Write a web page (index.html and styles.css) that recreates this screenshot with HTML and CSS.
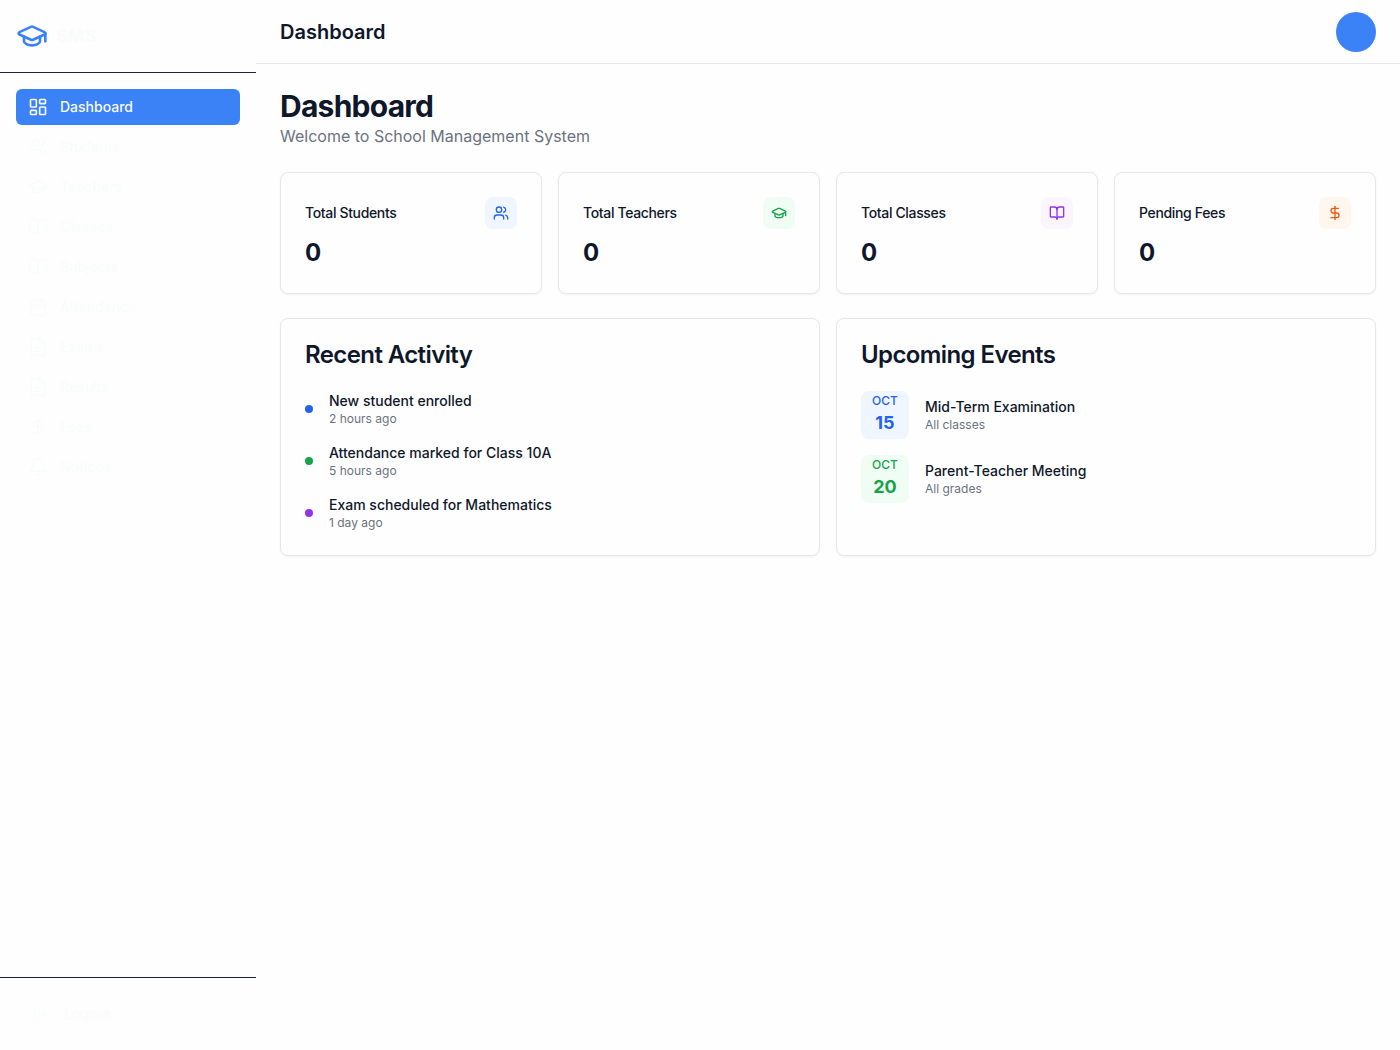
FILE: index.html
```html
<!DOCTYPE html>
<html lang="en">
<head>
<meta charset="utf-8">
<meta name="viewport" content="width=device-width, initial-scale=1">
<title>Dashboard</title>
<link rel="stylesheet" href="styles.css">
</head>
<body>
<svg class="sprite" aria-hidden="true">
  <symbol id="cap" viewBox="0 0 24 24"><path d="M21.42 10.922a1 1 0 0 0-.019-1.838L12.83 5.18a2 2 0 0 0-1.66 0L2.6 9.08a1 1 0 0 0 0 1.832l8.57 3.908a2 2 0 0 0 1.66 0z"/><path d="M22 10v6"/><path d="M6 12.5V16a6 3 0 0 0 12 0v-3.5"/></symbol>
  <symbol id="grid" viewBox="0 0 24 24"><rect width="7" height="9" x="3" y="3" rx="1"/><rect width="7" height="5" x="14" y="3" rx="1"/><rect width="7" height="9" x="14" y="12" rx="1"/><rect width="7" height="5" x="3" y="16" rx="1"/></symbol>
  <symbol id="users" viewBox="0 0 24 24"><path d="M16 21v-2a4 4 0 0 0-4-4H6a4 4 0 0 0-4 4v2"/><circle cx="9" cy="7" r="4"/><path d="M22 21v-2a4 4 0 0 0-3-3.87"/><path d="M16 3.13a4 4 0 0 1 0 7.75"/></symbol>
  <symbol id="book" viewBox="0 0 24 24"><path d="M12 7v14"/><path d="M3 18a1 1 0 0 1-1-1V4a1 1 0 0 1 1-1h5a4 4 0 0 1 4 4 4 4 0 0 1 4-4h5a1 1 0 0 1 1 1v13a1 1 0 0 1-1 1h-6a3 3 0 0 0-3 3 3 3 0 0 0-3-3z"/></symbol>
  <symbol id="calendar" viewBox="0 0 24 24"><path d="M8 2v4"/><path d="M16 2v4"/><rect width="18" height="18" x="3" y="4" rx="2"/><path d="M3 10h18"/></symbol>
  <symbol id="file" viewBox="0 0 24 24"><path d="M15 2H6a2 2 0 0 0-2 2v16a2 2 0 0 0 2 2h12a2 2 0 0 0 2-2V7Z"/><path d="M14 2v4a2 2 0 0 0 2 2h4"/><path d="M16 13H8"/><path d="M16 17H8"/></symbol>
  <symbol id="dollar" viewBox="0 0 24 24"><path d="M12 2v20"/><path d="M17 5H9.5a3.5 3.5 0 0 0 0 7h5a3.5 3.5 0 0 1 0 7H6"/></symbol>
  <symbol id="bell" viewBox="0 0 24 24"><path d="M10.268 21a2 2 0 0 0 3.464 0"/><path d="M3.262 15.326A1 1 0 0 0 4 17h16a1 1 0 0 0 .74-1.673C19.41 13.956 18 12.499 18 8A6 6 0 0 0 6 8c0 4.499-1.411 5.956-2.738 7.326"/></symbol>
  <symbol id="logout" viewBox="0 0 24 24"><path d="m16 17 5-5-5-5"/><path d="M21 12H9"/><path d="M9 21H5a2 2 0 0 1-2-2V5a2 2 0 0 1 2-2h4"/></symbol>
</svg>
<div class="app">
  <aside class="sidebar">
    <div class="brand"><svg class="icon icon-lg"><use href="#cap"/></svg><span>SMS</span></div>
    <nav class="nav">
      <a class="nav-link active" href="#"><svg class="icon icon-md"><use href="#grid"/></svg>Dashboard</a>
      <a class="nav-link" href="#"><svg class="icon icon-md"><use href="#users"/></svg>Students</a>
      <a class="nav-link" href="#"><svg class="icon icon-md"><use href="#cap"/></svg>Teachers</a>
      <a class="nav-link" href="#"><svg class="icon icon-md"><use href="#book"/></svg>Classes</a>
      <a class="nav-link" href="#"><svg class="icon icon-md"><use href="#book"/></svg>Subjects</a>
      <a class="nav-link" href="#"><svg class="icon icon-md"><use href="#calendar"/></svg>Attendance</a>
      <a class="nav-link" href="#"><svg class="icon icon-md"><use href="#file"/></svg>Exams</a>
      <a class="nav-link" href="#"><svg class="icon icon-md"><use href="#file"/></svg>Results</a>
      <a class="nav-link" href="#"><svg class="icon icon-md"><use href="#dollar"/></svg>Fees</a>
      <a class="nav-link" href="#"><svg class="icon icon-md"><use href="#bell"/></svg>Notices</a>
    </nav>
    <div class="sidebar-foot"><button class="logout" type="button"><svg class="icon icon-sm"><use href="#logout"/></svg>Logout</button></div>
  </aside>
  <div class="content">
    <header class="topbar"><span class="topbar-title">Dashboard</span><button class="avatar" type="button" aria-label="Account"></button></header>
    <main class="main">
      <div>
        <h1 class="title">Dashboard</h1>
        <p class="subtitle">Welcome to School Management System</p>
      </div>
      <section class="stats">
        <article class="card"><div class="stat-head"><h2 class="stat-label">Total Students</h2><span class="badge blue"><svg class="icon icon-sm"><use href="#users"/></svg></span></div><p class="stat-value">0</p></article>
        <article class="card"><div class="stat-head"><h2 class="stat-label">Total Teachers</h2><span class="badge green"><svg class="icon icon-sm"><use href="#cap"/></svg></span></div><p class="stat-value">0</p></article>
        <article class="card"><div class="stat-head"><h2 class="stat-label">Total Classes</h2><span class="badge purple"><svg class="icon icon-sm"><use href="#book"/></svg></span></div><p class="stat-value">0</p></article>
        <article class="card"><div class="stat-head"><h2 class="stat-label">Pending Fees</h2><span class="badge orange"><svg class="icon icon-sm"><use href="#dollar"/></svg></span></div><p class="stat-value">0</p></article>
      </section>
      <section class="panels">
        <article class="card">
          <h2 class="panel-title">Recent Activity</h2>
          <ul class="list">
            <li class="row"><span class="dot dot-blue"></span><div><p class="row-title">New student enrolled</p><p class="row-note">2 hours ago</p></div></li>
            <li class="row"><span class="dot dot-green"></span><div><p class="row-title">Attendance marked for Class 10A</p><p class="row-note">5 hours ago</p></div></li>
            <li class="row"><span class="dot dot-purple"></span><div><p class="row-title">Exam scheduled for Mathematics</p><p class="row-note">1 day ago</p></div></li>
          </ul>
        </article>
        <article class="card">
          <h2 class="panel-title">Upcoming Events</h2>
          <ul class="list">
            <li class="row"><div class="date blue"><span class="month">OCT</span><span class="day">15</span></div><div><p class="row-title">Mid-Term Examination</p><p class="row-note">All classes</p></div></li>
            <li class="row"><div class="date green"><span class="month">OCT</span><span class="day">20</span></div><div><p class="row-title">Parent-Teacher Meeting</p><p class="row-note">All grades</p></div></li>
          </ul>
        </article>
      </section>
    </main>
  </div>
</div>
</body>
</html>
```
FILE: styles.css
```css
*, *::before, *::after { box-sizing: border-box; }
body, h1, h2, p, ul { margin: 0; padding: 0; }
ul { list-style: none; }
body {
  font-family: Inter, "Liberation Sans", sans-serif;
  font-size: 16px;
  line-height: 24px;
  color: #0f172a;
  background: #fefefe;
}
button { font: inherit; border: 0; cursor: pointer; }
.sprite { display: none; }
.icon { flex: none; fill: none; stroke: currentColor; stroke-width: 2; stroke-linecap: round; stroke-linejoin: round; }
.icon-sm { width: 16px; height: 16px; }
.icon-md { width: 20px; height: 20px; }
.icon-lg { width: 32px; height: 32px; }

.app { display: flex; min-height: 100vh; }
.sidebar { display: flex; flex-direction: column; flex: none; width: 256px; color: #fafcfc; }
.brand {
  display: flex;
  align-items: center;
  gap: 8px;
  padding: 20px 16px;
  font-size: 18px;
  line-height: 28px;
  font-weight: 700;
  border-bottom: 1px solid #1e2235;
}
.brand .icon { color: #3b82f6; }
.nav { display: flex; flex-direction: column; flex: 1; gap: 4px; padding: 16px; }
.nav-link {
  display: flex;
  align-items: center;
  gap: 12px;
  padding: 8px 12px;
  border-radius: 6px;
  font-size: 14px;
  line-height: 20px;
  font-weight: 500;
  color: inherit;
  text-decoration: none;
}
.nav-link.active { background: #3b82f6; color: #f8fafc; }
.sidebar-foot { padding: 16px; border-top: 1px solid #1e2235; }
.logout {
  display: flex;
  align-items: center;
  gap: 16px;
  width: 100%;
  padding: 10px 16px;
  font-size: 14px;
  line-height: 20px;
  font-weight: 500;
  color: inherit;
  background: none;
}

.content { flex: 1; min-width: 0; }
.topbar {
  display: flex;
  align-items: center;
  justify-content: space-between;
  height: 64px;
  padding: 0 24px;
  border-bottom: 1px solid #e5e7eb;
}
.topbar-title { font-size: 20px; line-height: 28px; font-weight: 600; }
.avatar { width: 40px; height: 40px; padding: 0; border-radius: 50%; background: #3b82f6; }
.main { display: flex; flex-direction: column; gap: 24px; padding: 24px; }
.title { font-size: 30px; line-height: 36px; font-weight: 700; letter-spacing: -0.025em; }
.subtitle { color: #6b7280; }

.stats { display: grid; grid-template-columns: repeat(4, 1fr); gap: 16px; }
.panels { display: grid; grid-template-columns: repeat(2, 1fr); gap: 16px; }
.card {
  padding: 24px;
  background: #fefefe;
  border: 1px solid #e5e7eb;
  border-radius: 8px;
  box-shadow: 0 1px 2px rgb(0 0 0 / 5%);
}
.stat-head { display: flex; align-items: center; justify-content: space-between; padding-bottom: 8px; }
.stat-label { font-size: 14px; line-height: 20px; font-weight: 500; letter-spacing: -0.025em; }
.stat-value { font-size: 24px; line-height: 32px; font-weight: 700; }
.badge { display: flex; padding: 8px; border-radius: 8px; }
.blue { color: #2563eb; background: #eff6ff; }
.green { color: #16a34a; background: #f0fdf4; }
.purple { color: #9333ea; background: #faf5ff; }
.orange { color: #ea580c; background: #fff7ed; }

.panel-title { font-size: 24px; line-height: 24px; font-weight: 600; letter-spacing: -0.025em; }
.list { display: flex; flex-direction: column; gap: 16px; padding-top: 24px; }
.row { display: flex; align-items: center; gap: 16px; }
.row-title { font-size: 14px; line-height: 20px; font-weight: 500; }
.row-note { font-size: 12px; line-height: 16px; color: #6b7280; }
.dot { flex: none; width: 8px; height: 8px; border-radius: 50%; }
.dot-blue { background: #2563eb; }
.dot-green { background: #16a34a; }
.dot-purple { background: #9333ea; }
.date {
  display: flex;
  flex-direction: column;
  align-items: center;
  justify-content: center;
  flex: none;
  width: 48px;
  height: 48px;
  border-radius: 8px;
}
.month { font-size: 12px; line-height: 16px; font-weight: 500; }
.day { font-size: 18px; line-height: 28px; font-weight: 700; }
```
